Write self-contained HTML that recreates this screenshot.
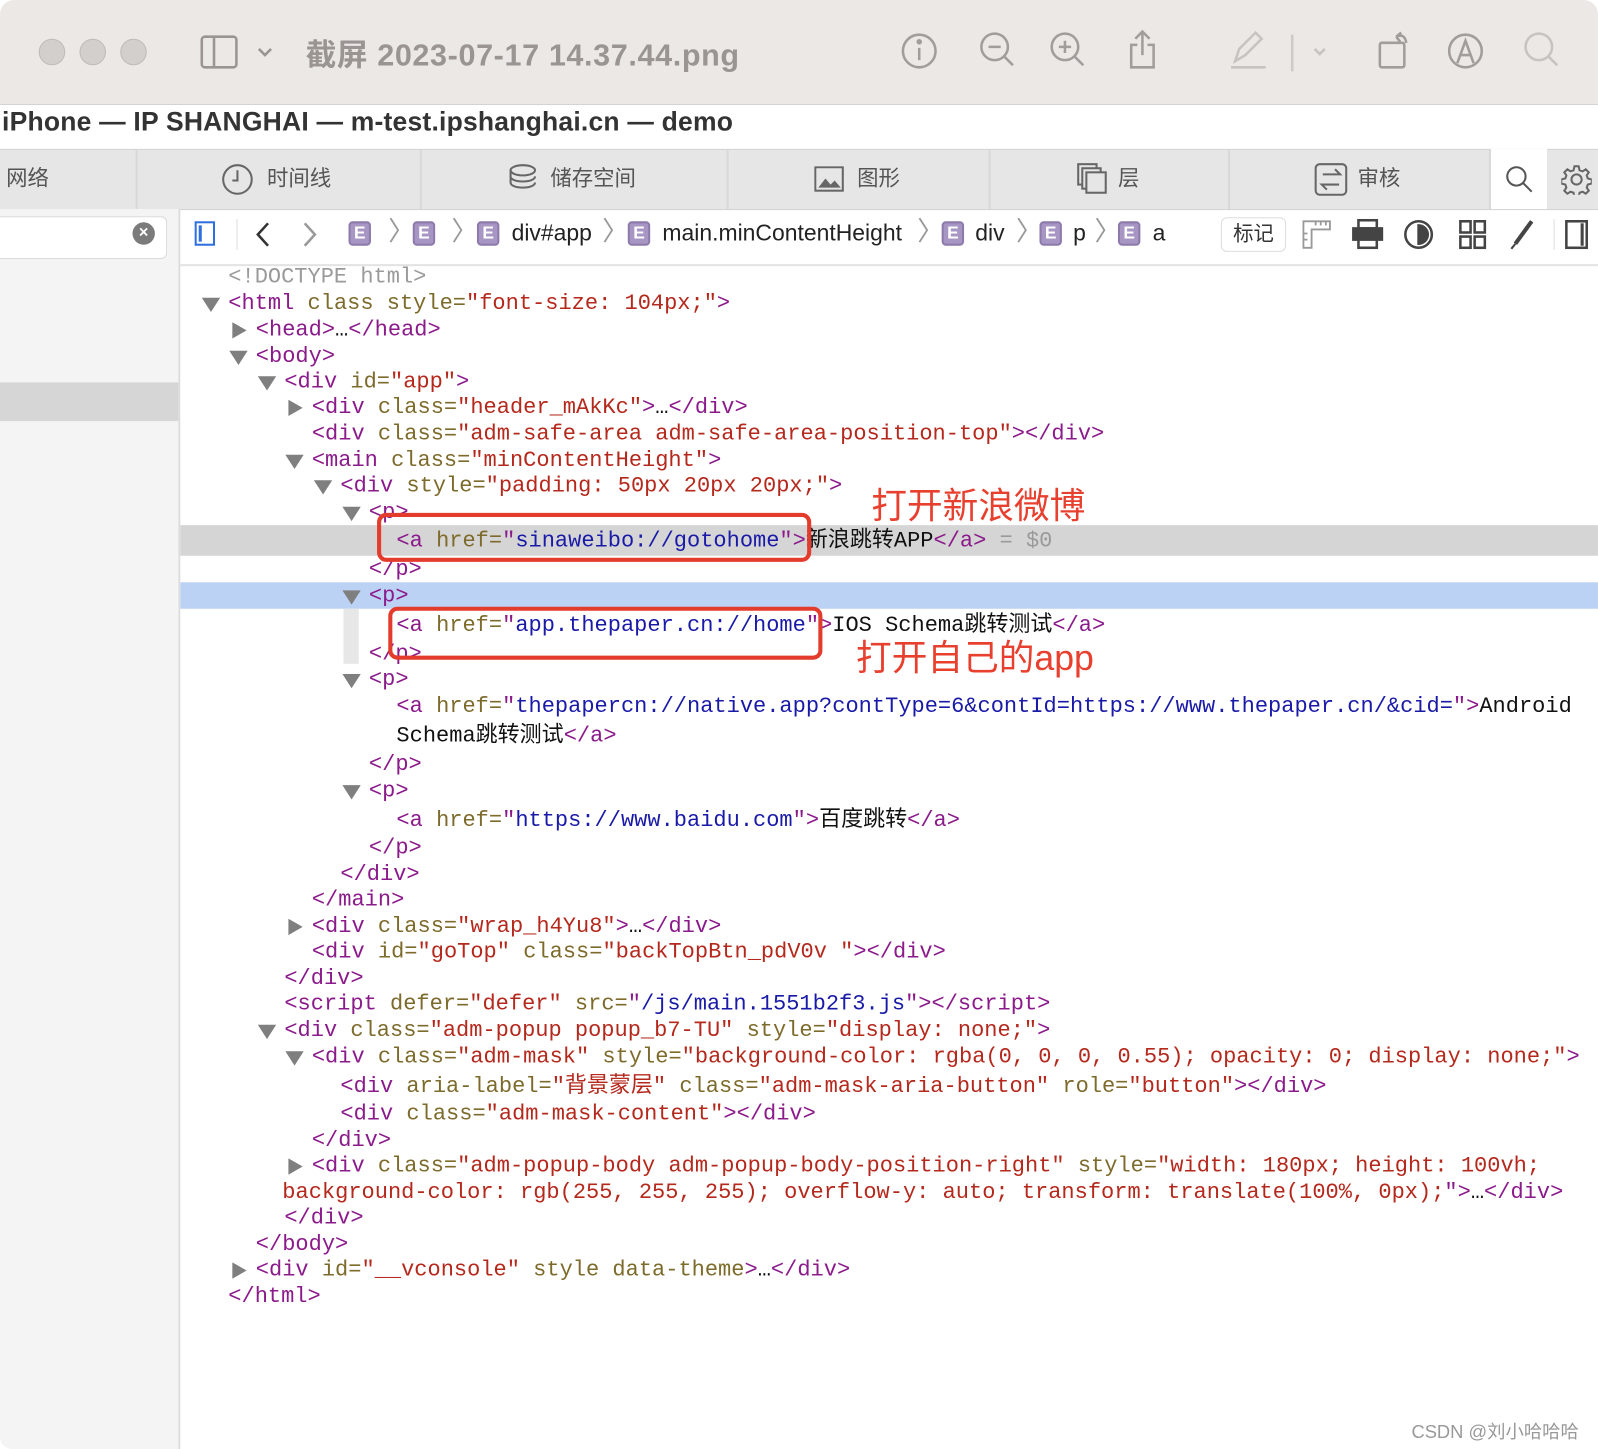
<!DOCTYPE html>
<html><head><meta charset="utf-8">
<style>
html,body{margin:0;padding:0;background:#fff;}
body{width:1598px;height:1448px;overflow:hidden;position:relative;}
#w{position:absolute;left:0;top:0;width:1568px;height:1421px;transform-origin:0 0;transform:scale(1.0191,1.0197);font-family:"Liberation Sans","Noto Sans CJK SC",sans-serif;}
.abs{position:absolute;}
.tb{left:0;top:0;width:1568px;height:102px;background:#ece8e6;border-bottom:1px solid #d6d2d0;border-radius:14px 14px 0 0;}
.tl{width:24px;height:24px;border-radius:50%;background:#d3cfcd;border:1px solid #bfbbb9;top:38px;}
.tabs{left:0;top:146px;width:1568px;height:58px;background:#e6e6e6;border-top:1px solid #d4d4d4;border-bottom:1px solid #d4d4d4;}
.tab{position:absolute;top:0;height:58px;border-right:2px solid #d8d8d8;box-sizing:border-box;font-size:21px;color:#555;line-height:58px;font-family:"Liberation Sans","Noto Sans CJK SC",sans-serif;}
.mono{position:absolute;left:0;top:2px;width:1568px;font-family:"Liberation Mono","Noto Sans CJK SC",monospace;font-size:21.6px;}
.l{position:absolute;height:26px;line-height:26px;white-space:pre;}
.t{color:#8b1a8b}.n{color:#7d6b2c}.v{color:#b5281c}.u{color:#1a1aa8}.k{color:#111}.g{color:#9a9a9a}
.tri{position:absolute;width:0;height:0;}
.dn{border-left:9px solid transparent;border-right:9px solid transparent;border-top:14px solid #7f7f7f;}
.rt{border-top:8px solid transparent;border-bottom:8px solid transparent;border-left:14px solid #7f7f7f;}
.E{position:absolute;top:217px;width:22px;height:24px;background:#a796c4;border:2px solid #8c7aab;border-radius:4px;box-sizing:border-box;color:#fff;font-size:17px;line-height:20px;text-align:center;font-weight:bold;}
.bc{position:absolute;top:214px;font-size:22.5px;color:#222;line-height:30px;}
.ch{position:absolute;top:212px;font-size:26px;color:#999;line-height:30px;}
.ann{position:absolute;color:#e8402f;font-size:35px;font-family:"Liberation Sans","Noto Sans CJK SC",sans-serif;}
.box{position:absolute;border:4px solid #e33b2c;border-radius:9px;box-sizing:border-box;}
</style></head><body>
<div id="w">
<div class="abs tb"></div>
<div class="abs tl" style="left:38px"></div>
<div class="abs tl" style="left:78px"></div>
<div class="abs tl" style="left:118px"></div>
<svg class="abs" style="left:196px;top:34px" width="80" height="34" viewBox="0 0 80 34"><rect x="2" y="2" width="34" height="30" rx="3" fill="none" stroke="#9a9593" stroke-width="2.5"/><line x1="14" y1="2" x2="14" y2="32" stroke="#9a9593" stroke-width="2.5"/><path d="M58 14l6 6 6-6" fill="none" stroke="#9a9593" stroke-width="2.5"/></svg>
<div class="abs" style="left:300px;top:29px;font-size:30px;letter-spacing:0.6px;font-weight:bold;color:#9a9593;">截屏 2023-07-17 14.37.44.png</div>
<svg class="abs" style="left:880px;top:28px" width="660" height="44" viewBox="0 0 660 44" fill="none" stroke="#a29d9b" stroke-width="2.5">
<circle cx="22" cy="22" r="16"/><line x1="22" y1="19" x2="22" y2="31"/><circle cx="22" cy="13" r="1.5" fill="#a29d9b"/>
<circle cx="96" cy="18" r="13"/><line x1="90" y1="18" x2="102" y2="18"/><line x1="105" y1="27" x2="114" y2="36"/>
<circle cx="165" cy="18" r="13"/><line x1="159" y1="18" x2="171" y2="18"/><line x1="165" y1="12" x2="165" y2="24"/><line x1="174" y1="27" x2="183" y2="36"/>
<path d="M236 16h-6v22h22v-22h-6M241 26V3M234 10l7-7 7 7"/>
<path d="M332 32l4-12 16-16 6 6-16 16z M328 38h34" stroke="#c8c3c1"/><line x1="388" y1="6" x2="388" y2="42" stroke="#cfcac8"/><path d="M410 20l5 5 5-5" stroke="#c8c3c1"/>
<rect x="474" y="14" width="24" height="24" rx="2"/><path d="M490 8q8-4 10 6M490 8l5-4M490 8l4 5"/>
<circle cx="558" cy="22" r="16"/><path d="M550 34l8-22 8 22M553 26h10"/>
<circle cx="630" cy="18" r="13" stroke="#c8c3c1"/><line x1="639" y1="27" x2="648" y2="36" stroke="#c8c3c1"/>
</svg>
<div class="abs" style="left:2px;top:104px;font-size:26px;letter-spacing:0.2px;font-weight:bold;color:#333;">iPhone — IP SHANGHAI — m-test.ipshanghai.cn — demo</div>
<div class="abs tabs">
<div class="tab" style="left:0;width:135px;padding-left:6px;">网络</div>
<div class="tab" style="left:135px;width:279px;"><svg style="position:absolute;left:82px;top:13px" width="32" height="32"><circle cx="16" cy="16" r="14" fill="none" stroke="#666" stroke-width="2"/><path d="M16 7v10h-5" fill="none" stroke="#666" stroke-width="2"/></svg><span style="position:absolute;left:127px">时间线</span></div>
<div class="tab" style="left:414px;width:301px;"><svg style="position:absolute;left:84px;top:13px" width="30" height="32" fill="none" stroke="#666" stroke-width="2"><ellipse cx="15" cy="7" rx="12" ry="5"/><path d="M3 7v6c0 3 5 5 12 5s12-2 12-5M3 13v6c0 3 5 5 12 5s12-2 12-5"/></svg><span style="position:absolute;left:126px">储存空间</span></div>
<div class="tab" style="left:715px;width:257px;"><svg style="position:absolute;left:84px;top:16px" width="30" height="26"><rect x="1" y="1" width="27" height="23" fill="none" stroke="#666" stroke-width="2"/><path d="M4 21l7-9 5 6 4-4 6 7z" fill="#666"/></svg><span style="position:absolute;left:126px">图形</span></div>
<div class="tab" style="left:972px;width:235px;"><svg style="position:absolute;left:84px;top:12px" width="32" height="32" fill="#e6e6e6" stroke="#666" stroke-width="2"><rect x="2" y="2" width="18" height="20"/><rect x="6" y="6" width="18" height="20"/><rect x="10" y="10" width="19" height="20"/></svg><span style="position:absolute;left:125px">层</span></div>
<div class="tab" style="left:1207px;width:256px;"><svg style="position:absolute;left:82px;top:12px" width="34" height="34" fill="none" stroke="#666" stroke-width="2"><rect x="2" y="2" width="30" height="30" rx="4"/><path d="M9 12h17l-5-5M25 22H8l5 5"/></svg><span style="position:absolute;left:125px">审核</span></div>
<div style="position:absolute;left:1463px;top:-1px;width:55px;height:59px;background:#fff;"><svg style="position:absolute;left:14px;top:16px" width="28" height="28" fill="none" stroke="#555" stroke-width="2"><circle cx="11" cy="11" r="9"/><line x1="17" y1="17" x2="26" y2="26"/></svg></div>
<svg style="position:absolute;left:1532px;top:14px" width="30" height="30" viewBox="0 0 30 30" fill="none" stroke="#666" stroke-width="2"><circle cx="15" cy="15" r="5"/><path d="M13 2h4l1 4 3 1 3-2 3 3-2 3 1 3 4 1v4l-4 1-1 3 2 3-3 3-3-2-3 1-1 4h-4l-1-4-3-1-3 2-3-3 2-3-1-3-4-1v-4l4-1 1-3-2-3 3-3 3 2 3-1z"/></svg>
</div>
<div class="abs" style="left:0;top:205px;width:175px;height:1216px;background:#f4f4f4;border-right:2px solid #dcdcdc;border-radius:0 0 0 12px;"></div>
<div class="abs" style="left:0;top:212px;width:163px;height:40px;background:#fff;border:1px solid #dadada;border-left:none;border-radius:0 6px 6px 0;"></div>
<div class="abs" style="left:130px;top:218px;width:22px;height:22px;border-radius:50%;background:#7b7b7b;color:#fff;font-size:16px;line-height:22px;text-align:center;font-weight:bold;">×</div>
<div class="abs" style="left:0;top:375px;width:175px;height:38px;background:#d6d6d6;"></div>
<div class="abs" style="left:177px;top:259px;width:1391px;height:2px;background:#e3e3e3;"></div>
<div class="abs" style="left:191px;top:217px;width:20px;height:24px;border:2px solid #2f6fe0;box-sizing:border-box;"><div style="position:absolute;left:2px;top:2px;width:3px;height:16px;background:#2f6fe0"></div></div>
<div class="abs" style="left:232px;top:215px;width:1px;height:30px;background:#ddd;"></div>
<svg class="abs" style="left:245px;top:216px" width="80" height="28" fill="none" stroke-width="2.5"><path d="M18 3L8 14l10 11" stroke="#333"/><path d="M54 3l10 11-10 11" stroke="#999"/></svg>
<div class="E" style="left:342px">E</div><div class="ch" style="left:381px">〉</div>
<div class="E" style="left:405px">E</div><div class="ch" style="left:443px">〉</div>
<div class="E" style="left:468px">E</div><div class="bc" style="left:502px">div#app</div><div class="ch" style="left:591px">〉</div>
<div class="E" style="left:616px">E</div><div class="bc" style="left:650px">main.minContentHeight</div><div class="ch" style="left:900px">〉</div>
<div class="E" style="left:924px">E</div><div class="bc" style="left:957px">div</div><div class="ch" style="left:997px">〉</div>
<div class="E" style="left:1020px">E</div><div class="bc" style="left:1053px">p</div><div class="ch" style="left:1074px">〉</div>
<div class="E" style="left:1097px">E</div><div class="bc" style="left:1131px">a</div>
<div class="abs" style="left:1198px;top:213px;width:62px;height:32px;border:1px solid #ddd;border-radius:6px;font-size:20px;line-height:32px;text-align:center;color:#333;">标记</div>
<svg class="abs" style="left:1275px;top:213px" width="290" height="34" fill="none" stroke="#444" stroke-width="2.5">
<path d="M4 30V4h26v8H12v18z M16 4v4M21 4v4M26 4v4M4 16h4M4 22h4" stroke="#999" stroke-width="1.8"/>
<rect x="58" y="3" width="18" height="8"/><rect x="53" y="11" width="28" height="11" fill="#444"/><rect x="58" y="18" width="18" height="12"/>
<circle cx="117" cy="17" r="13"/><path d="M117 8a9 9 0 0 1 0 18z" fill="#444"/>
<rect x="158" y="4" width="10" height="11"/><rect x="172" y="4" width="10" height="11"/><rect x="158" y="19" width="10" height="11"/><rect x="172" y="19" width="10" height="11"/>
<path d="M228 4L212 26" stroke-width="4"/><path d="M212 26l-4 5" stroke-width="2"/>
<line x1="250" y1="2" x2="250" y2="32" stroke="#ddd" stroke-width="1"/>
<rect x="262" y="4" width="20" height="26"/><rect x="276" y="6" width="3" height="22" fill="#444" stroke="none"/>
</svg>
<div class="abs" style="left:177px;top:515px;width:1391px;height:30px;background:#d5d5d5;"></div>
<div class="abs" style="left:177px;top:571px;width:1391px;height:26px;background:#bcd2f4;"></div>
<div class="abs" style="left:337px;top:597px;width:15px;height:54px;background:#e7e7e7;"></div>
<div class="mono">
<div class="l g" style="left:224px;top:257px">&lt;!DOCTYPE html&gt;</div>
<div class="tri dn" style="left:198px;top:290px"></div><div class="l" style="left:224px;top:283px"><span class="t">&lt;html</span> <span class="n">class style=</span><span class="v">"font-size: 104px;"</span><span class="t">&gt;</span></div>
<div class="tri rt" style="left:228px;top:314px"></div><div class="l t" style="left:251px;top:309px">&lt;head&gt;<span class="k">…</span>&lt;/head&gt;</div>
<div class="tri dn" style="left:225px;top:342px"></div><div class="l t" style="left:251px;top:335px">&lt;body&gt;</div>
<div class="tri dn" style="left:253px;top:367px"></div><div class="l" style="left:279px;top:360px"><span class="t">&lt;div</span> <span class="n">id=</span><span class="v">"app"</span><span class="t">&gt;</span></div>
<div class="tri rt" style="left:283px;top:390px"></div><div class="l" style="left:306px;top:385px"><span class="t">&lt;div</span> <span class="n">class=</span><span class="v">"header_mAkKc"</span><span class="t">&gt;</span><span class="k">…</span><span class="t">&lt;/div&gt;</span></div>
<div class="l" style="left:306px;top:411px"><span class="t">&lt;div</span> <span class="n">class=</span><span class="v">"adm-safe-area adm-safe-area-position-top"</span><span class="t">&gt;&lt;/div&gt;</span></div>
<div class="tri dn" style="left:280px;top:444px"></div><div class="l" style="left:306px;top:437px"><span class="t">&lt;main</span> <span class="n">class=</span><span class="v">"minContentHeight"</span><span class="t">&gt;</span></div>
<div class="tri dn" style="left:308px;top:469px"></div><div class="l" style="left:334px;top:462px"><span class="t">&lt;div</span> <span class="n">style=</span><span class="v">"padding: 50px 20px 20px;"</span><span class="t">&gt;</span></div>
<div class="tri dn" style="left:336px;top:495px"></div><div class="l t" style="left:362px;top:488px">&lt;p&gt;</div>
<div class="l" style="left:389px;top:516px"><span class="t">&lt;a</span> <span class="n">href=</span><span class="t">"</span><span class="u">sinaweibo://gotohome</span><span class="t">"&gt;</span><span class="k">新浪跳转APP</span><span class="t">&lt;/a&gt;</span> <span class="g">= $0</span></div>
<div class="l t" style="left:362px;top:544px">&lt;/p&gt;</div>
<div class="tri dn" style="left:336px;top:577px"></div><div class="l t" style="left:362px;top:570px">&lt;p&gt;</div>
<div class="l" style="left:389px;top:599px"><span class="t">&lt;a</span> <span class="n">href=</span><span class="t">"</span><span class="u">app.thepaper.cn://home</span><span class="t">"&gt;</span><span class="k">IOS Schema跳转测试</span><span class="t">&lt;/a&gt;</span></div>
<div class="l t" style="left:362px;top:627px">&lt;/p&gt;</div>
<div class="tri dn" style="left:336px;top:659px"></div><div class="l t" style="left:362px;top:652px">&lt;p&gt;</div>
<div class="l" style="left:389px;top:678px"><span class="t">&lt;a</span> <span class="n">href=</span><span class="t">"</span><span class="u">thepapercn://native.app?contType=6&amp;contId=https://www.thepaper.cn/&amp;cid=</span><span class="t">"&gt;</span><span class="k">Android</span></div>
<div class="l" style="left:389px;top:707px"><span class="k">Schema跳转测试</span><span class="t">&lt;/a&gt;</span></div>
<div class="l t" style="left:362px;top:735px">&lt;/p&gt;</div>
<div class="tri dn" style="left:336px;top:768px"></div><div class="l t" style="left:362px;top:761px">&lt;p&gt;</div>
<div class="l" style="left:389px;top:790px"><span class="t">&lt;a</span> <span class="n">href=</span><span class="t">"</span><span class="u">https://www.baidu.com</span><span class="t">"&gt;</span><span class="k">百度跳转</span><span class="t">&lt;/a&gt;</span></div>
<div class="l t" style="left:362px;top:817px">&lt;/p&gt;</div>
<div class="l t" style="left:334px;top:843px">&lt;/div&gt;</div>
<div class="l t" style="left:306px;top:868px">&lt;/main&gt;</div>
<div class="tri rt" style="left:283px;top:899px"></div><div class="l" style="left:306px;top:894px"><span class="t">&lt;div</span> <span class="n">class=</span><span class="v">"wrap_h4Yu8"</span><span class="t">&gt;</span><span class="k">…</span><span class="t">&lt;/div&gt;</span></div>
<div class="l" style="left:306px;top:919px"><span class="t">&lt;div</span> <span class="n">id=</span><span class="v">"goTop"</span> <span class="n">class=</span><span class="v">"backTopBtn_pdV0v "</span><span class="t">&gt;&lt;/div&gt;</span></div>
<div class="l t" style="left:279px;top:945px">&lt;/div&gt;</div>
<div class="l" style="left:279px;top:970px"><span class="t">&lt;script</span> <span class="n">defer=</span><span class="v">"defer"</span> <span class="n">src=</span><span class="t">"</span><span class="u">/js/main.1551b2f3.js</span><span class="t">"&gt;&lt;/script&gt;</span></div>
<div class="tri dn" style="left:253px;top:1003px"></div><div class="l" style="left:279px;top:996px"><span class="t">&lt;div</span> <span class="n">class=</span><span class="v">"adm-popup popup_b7-TU"</span> <span class="n">style=</span><span class="v">"display: none;"</span><span class="t">&gt;</span></div>
<div class="tri dn" style="left:280px;top:1029px"></div><div class="l" style="left:306px;top:1022px"><span class="t">&lt;div</span> <span class="n">class=</span><span class="v">"adm-mask"</span> <span class="n">style=</span><span class="v">"background-color: rgba(0, 0, 0, 0.55); opacity: 0; display: none;"</span><span class="t">&gt;</span></div>
<div class="l" style="left:334px;top:1051px"><span class="t">&lt;div</span> <span class="n">aria-label=</span><span class="v">"背景蒙层"</span> <span class="n">class=</span><span class="v">"adm-mask-aria-button"</span> <span class="n">role=</span><span class="v">"button"</span><span class="t">&gt;&lt;/div&gt;</span></div>
<div class="l" style="left:334px;top:1078px"><span class="t">&lt;div</span> <span class="n">class=</span><span class="v">"adm-mask-content"</span><span class="t">&gt;&lt;/div&gt;</span></div>
<div class="l t" style="left:306px;top:1104px">&lt;/div&gt;</div>
<div class="tri rt" style="left:283px;top:1134px"></div><div class="l" style="left:306px;top:1129px"><span class="t">&lt;div</span> <span class="n">class=</span><span class="v">"adm-popup-body adm-popup-body-position-right"</span> <span class="n">style=</span><span class="v">"width: 180px; height: 100vh;</span></div>
<div class="l" style="left:277px;top:1155px"><span class="v">background-color: rgb(255, 255, 255); overflow-y: auto; transform: translate(100%, 0px);</span><span class="t">"&gt;</span><span class="k">…</span><span class="t">&lt;/div&gt;</span></div>
<div class="l t" style="left:279px;top:1180px">&lt;/div&gt;</div>
<div class="l t" style="left:251px;top:1206px">&lt;/body&gt;</div>
<div class="tri rt" style="left:228px;top:1236px"></div><div class="l" style="left:251px;top:1231px"><span class="t">&lt;div</span> <span class="n">id=</span><span class="v">"__vconsole"</span> <span class="n">style data-theme</span><span class="t">&gt;</span><span class="k">…</span><span class="t">&lt;/div&gt;</span></div>
<div class="l t" style="left:224px;top:1257px">&lt;/html&gt;</div>
</div>
<div class="box" style="left:370px;top:503px;width:426px;height:48px;"></div>
<div class="box" style="left:381px;top:595px;width:426px;height:52px;"></div>
<div class="ann" style="left:855px;top:468px;">打开新浪微博</div>
<div class="ann" style="left:840px;top:617px;">打开自己的app</div>
<div class="abs" style="left:1385px;top:1390px;font-size:18px;color:#999;">CSDN @刘小哈哈哈</div>
</div>
</body></html>
